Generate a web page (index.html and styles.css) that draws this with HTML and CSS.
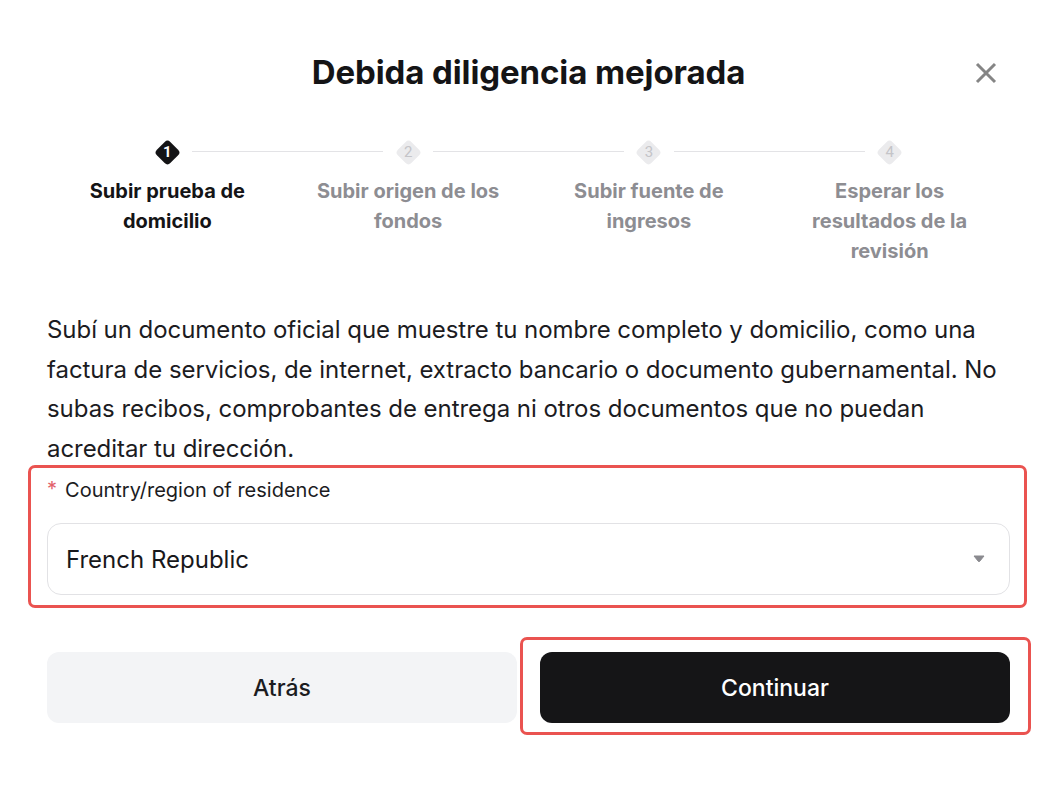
FILE: index.html
```html
<!DOCTYPE html>
<html lang="es">
<head>
<meta charset="utf-8">
<title>Debida diligencia mejorada</title>
<link rel="stylesheet" href="styles.css">
</head>
<body>
<div class="modal">
  <header class="modal-header">
    <span class="spacer"></span>
    <h1 class="modal-title">Debida diligencia mejorada</h1>
    <button class="close-btn" aria-label="Cerrar">
      <svg width="22" height="22" viewBox="0 0 22 22"><path d="M2 2 L20 20 M20 2 L2 20" stroke="#858585" stroke-width="3" stroke-linecap="butt" fill="none"/></svg>
    </button>
  </header>

  <ol class="steps">
    <li class="step step-active">
      <span class="step-mark"><span class="step-num">1</span></span>
      <span class="step-label">Subir prueba de domicilio</span>
    </li>
    <li class="step">
      <span class="step-mark"><span class="step-num">2</span></span>
      <span class="step-label">Subir origen de los fondos</span>
    </li>
    <li class="step">
      <span class="step-mark"><span class="step-num">3</span></span>
      <span class="step-label">Subir fuente de ingresos</span>
    </li>
    <li class="step">
      <span class="step-mark"><span class="step-num">4</span></span>
      <span class="step-label">Esperar los resultados de la revisión</span>
    </li>
  </ol>

  <p class="intro">Subí un documento oficial que muestre tu nombre completo y domicilio, como una factura de servicios, de internet, extracto bancario o documento gubernamental. No subas recibos, comprobantes de entrega ni otros documentos que no puedan acreditar tu dirección.</p>

  <div class="field highlight">
    <label class="field-label"><span class="req">*</span>Country/region of residence</label>
    <div class="select">
      <span class="select-value">French Republic</span>
      <svg class="caret" width="12" height="8" viewBox="0 0 12 8"><path d="M1 1 H11 L6.6 6.4 Q6 7 5.4 6.4 Z" fill="#8a8a8f" stroke="#8a8a8f" stroke-width="1" stroke-linejoin="round"/></svg>
    </div>
  </div>

  <div class="actions">
    <button class="btn btn-secondary">Atrás</button>
    <div class="btn-wrap highlight-btn">
      <button class="btn btn-primary">Continuar</button>
    </div>
  </div>
</div>
</body>
</html>
```

FILE: styles.css
```css
* { box-sizing: border-box; }

html, body {
  margin: 0;
  padding: 0;
  background: #ffffff;
}

body {
  font-family: Inter, Roboto, "Liberation Sans", sans-serif;
  color: #18181b;
  min-height: 788px;
}

.modal {
  width: 1064px;
  padding: 52px 54px 64px 47px;
}

.modal-header {
  display: grid;
  grid-template-columns: 1fr auto 1fr;
  align-items: center;
  height: 40px;
}

.modal-title {
  margin: 0;
  font-size: 33px;
  line-height: 40px;
  font-weight: 700;
  color: #141416;
  letter-spacing: -0.1px;
}

.close-btn {
  justify-self: end;
  margin-right: 12px;
  margin-top: 2px;
  width: 24px;
  height: 24px;
  padding: 1px;
  border: 0;
  background: none;
  display: flex;
  align-items: center;
  justify-content: center;
}

.steps {
  list-style: none;
  margin: 46px 0 0;
  padding: 0;
  display: grid;
  grid-template-columns: repeat(4, 1fr);
}

.step {
  position: relative;
  display: flex;
  flex-direction: column;
  align-items: center;
  text-align: center;
}

.step:not(:last-child)::after {
  content: "";
  position: absolute;
  top: 13px;
  left: calc(50% + 25px);
  right: calc(-50% + 25px);
  height: 1px;
  background: #e3e3e6;
}

.step-mark {
  width: 28px;
  height: 28px;
  display: flex;
  align-items: center;
  justify-content: center;
  position: relative;
}

.step-mark::before {
  content: "";
  position: absolute;
  width: 19px;
  height: 19px;
  left: 4.5px;
  top: 4.5px;
  border-radius: 4px;
  background: #ebebed;
  transform: rotate(45deg);
}

.step-num {
  position: relative;
  font-family: Roboto, sans-serif;
  font-size: 15px;
  line-height: 15px;
  font-weight: 400;
  color: #c4c4c8;
}

.step-active .step-mark::before {
  background: #141416;
}

.step-active .step-num {
  color: #ffffff;
  font-weight: 700;
}

.step-label {
  margin-top: 10px;
  width: 200px;
  font-size: 20px;
  line-height: 30px;
  font-weight: 700;
  color: #8d8d92;
}

.step-active .step-label {
  color: #141416;
}

.intro {
  margin: 44px 0 0;
  font-size: 24px;
  line-height: 39.5px;
  color: #1c1c1f;
  letter-spacing: -0.05px;
}

.field {
  position: relative;
  margin-top: 12px;
}

.highlight::before,
.highlight-btn::before {
  content: "";
  position: absolute;
  border: 3px solid #ea5350;
  border-radius: 7px;
  pointer-events: none;
}

.highlight::before {
  top: -15px;
  left: -19px;
  right: -17px;
  bottom: -13px;
}

.field-label {
  display: block;
  font-size: 20px;
  line-height: 20px;
  color: #1c1c1f;
}

.req {
  color: #e2606a;
  margin-right: 8px;
  display: inline-block;
  transform: translateY(-1px);
}

.select {
  margin-top: 23px;
  height: 72px;
  border: 1px solid #e2e2e5;
  border-radius: 14px;
  display: flex;
  align-items: center;
  justify-content: space-between;
  padding: 0 24px 0 18px;
}

.select-value {
  font-size: 24px;
  color: #18181b;
}

.caret {
  margin-top: 0;
}

.actions {
  margin-top: 57px;
  display: grid;
  grid-template-columns: 1fr 1fr;
  gap: 23px;
}

.btn-wrap {
  position: relative;
  display: flex;
}

.highlight-btn::before {
  top: -15px;
  left: -20px;
  right: -21px;
  bottom: -12px;
}

.btn {
  width: 100%;
  height: 71px;
  border: 0;
  border-radius: 12px;
  font-family: Inter, Roboto, "Liberation Sans", sans-serif;
  font-size: 23px;
  font-weight: 500;
}

.btn-secondary {
  background: #f3f4f6;
  color: #1c1c1f;
}

.btn-primary {
  background: #151517;
  color: #ffffff;
}
```
